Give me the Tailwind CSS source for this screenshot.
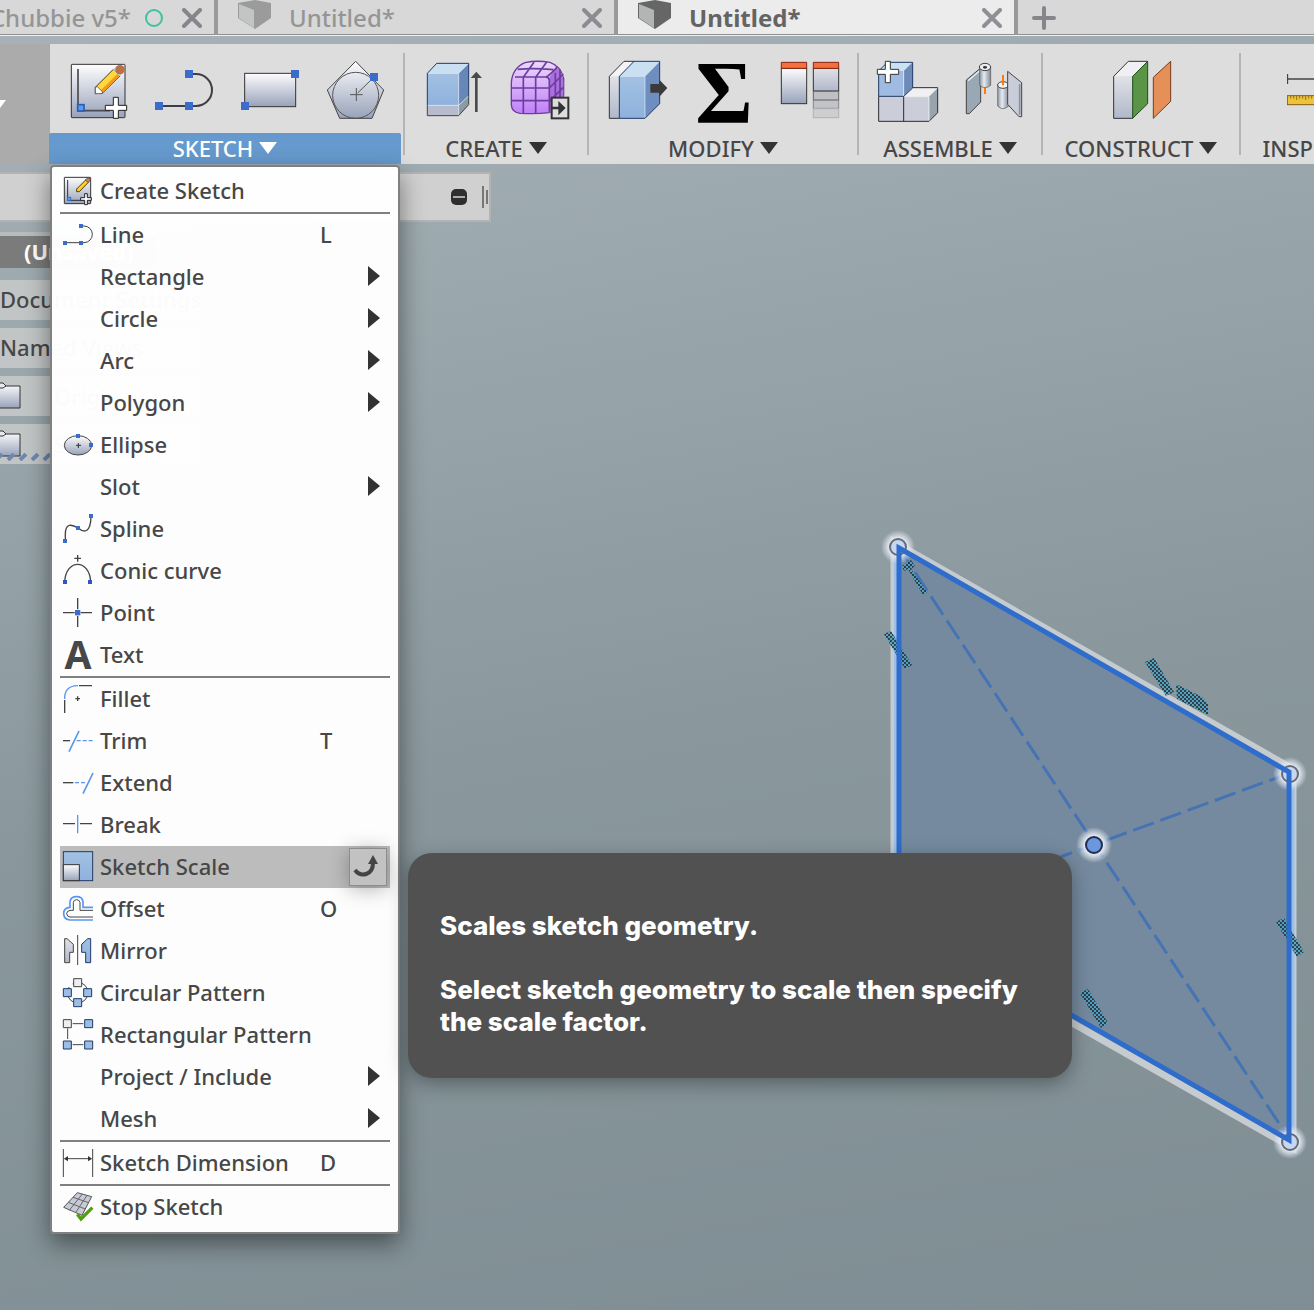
<!DOCTYPE html>
<html lang="en">
<head>
  <meta charset="UTF-8">
  <title>Untitled*</title>
  <script src="https://cdn.jsdelivr.net/npm/@tailwindcss/browser@4"></script>
</head>
<body class="font-['Noto_Sans','Open_Sans',sans-serif] text-[22px] font-medium text-[#474747]">
<div class="relative isolate min-h-screen overflow-hidden bg-linear-170 from-[#a7b3b8] via-[#8a989d] via-55% to-[#7f8e94]">

  <!-- shared gradients -->
  <svg class="absolute size-0" aria-hidden="true">
    <defs>
      <linearGradient id="steel" x1="0" y1="0" x2="0" y2="1"><stop offset="0" stop-color="#fdfdfe"/><stop offset="1" stop-color="#98a2ba"/></linearGradient>
      <linearGradient id="pale" x1="0" y1="0" x2="0" y2="1"><stop offset="0" stop-color="#e0e2e6"/><stop offset="1" stop-color="#b0b7ca"/></linearGradient>
      <linearGradient id="blue" x1="0" y1="0" x2="0" y2="1"><stop offset="0" stop-color="#a2c1e2"/><stop offset="1" stop-color="#8fb1dc"/></linearGradient>
      <linearGradient id="violet" x1="0" y1="0" x2="0" y2="1"><stop offset="0" stop-color="#ecd9fb"/><stop offset="1" stop-color="#c07ff8"/></linearGradient>
      <linearGradient id="tube" x1="0" y1="0" x2="1" y2="0"><stop offset="0" stop-color="#8d99a8"/><stop offset=".4" stop-color="#e8ebef"/><stop offset="1" stop-color="#7f8b9a"/></linearGradient>
      <radialGradient id="glow"><stop offset=".55" stop-color="#e2e7f0" stop-opacity=".95"/><stop offset="1" stop-color="#dfe5ee" stop-opacity="0"/></radialGradient>
      <pattern id="hatch" width="4" height="4" patternUnits="userSpaceOnUse"><rect width="4" height="4" fill="#20323c"/><rect width="2" height="2" fill="#4aa3c4"/><rect x="2" y="2" width="2" height="2" fill="#4aa3c4"/></pattern>
    </defs>
  </svg>

  <!-- sketch on the canvas -->
  <svg class="absolute left-0 top-0 -z-10" width="1314" height="1310" fill="none" aria-label="Sketch profile">
    <path d="M894 542 L1293 769 V1148 L894 922 Z" stroke="#c5cbce" stroke-width="7"/>
    <path d="M899 548 L1290 772 V1140 L899 916 Z" fill="#758a9f"/>
    <path d="M899 548 L1290 1140" stroke="#4673b3" stroke-width="3" stroke-dasharray="22 7"/>
    <path d="M1290 773 L899 916" stroke="#4673b3" stroke-width="3" stroke-dasharray="22 7"/>
    <path d="M1292 774 V1140" stroke="#9dbfe8" stroke-width="5"/>
    <path d="M896 550 V916" stroke="#9dbfe8" stroke-width="4"/>
    <g fill="url(#hatch)" opacity=".85">
      <path d="M884 634 L891 631 L912 665 L905 669 Z"/>
      <path d="M1145 662 L1154 658 L1174 692 L1166 696 Z"/>
      <path d="M1176 684 L1202 697 L1208 704 V715 L1177 699 Z"/>
      <path d="M1080 993 L1088 989 L1108 1023 L1101 1028 Z"/>
      <path d="M1276 922 L1284 918 L1304 952 L1297 957 Z"/>
      <path d="M902 566 L911 560 L915 566 L911 569 L927 592 L923 595 L908 569 L904 571 Z"/>
    </g>
    <g fill="url(#glow)">
      <circle cx="898" cy="547" r="17"/>
      <circle cx="1290" cy="774" r="17"/>
      <circle cx="1290" cy="1142" r="17"/>
      <circle cx="1094" cy="845" r="18"/>
    </g>
    <g stroke="#666c75" stroke-width="2" fill="#c6d6f3">
      <circle cx="898" cy="547" r="8"/>
      <circle cx="1290" cy="774" r="8"/>
      <circle cx="1290" cy="1142" r="8"/>
    </g>
    <circle cx="1094" cy="845" r="8" stroke="#1f2f52" stroke-width="2" fill="#6c97dd"/>
    <path d="M899 548 L1289 772 V1140 L899 916 Z" stroke="#2e6dcb" stroke-width="5"/>
  </svg>

  <!-- document tabs -->
  <header class="flex h-[36px] border-b border-[#f0f0ee] bg-[#d8d8d8] text-[24px] leading-[34px] text-[#959595] shadow-[inset_0_-1px_#8f908c]">
    <div class="flex w-[218px] shrink-0 items-center justify-end border-r-4 border-[#999] pr-[12px]">
      <span class="whitespace-nowrap">Chubbie v5*</span>
      <span class="ml-[14px] size-[18px] shrink-0 rounded-full border-2 border-[#43bfa0]"></span>
      <button class="ml-[19px]" aria-label="Close Chubbie v5"><svg width="20" height="20" viewBox="0 0 20 20"><path d="M2 2 18 18M18 2 2 18" stroke="#85868c" stroke-width="4" stroke-linecap="round"/></svg></button>
    </div>
    <div class="flex w-[400px] shrink-0 items-center border-r-4 border-[#999] pl-[20px] pr-[12px]">
      <svg class="self-start" width="33" height="30" viewBox="0 0 33 30"><path d="M0 3 17 0 33 3V18L17 29 0 18Z" fill="#9b9b9b"/><path d="M1 4 16 10V28L1 18Z" fill="#c3c5c5"/></svg>
      <span class="ml-[18px]">Untitled*</span>
      <button class="ml-auto" aria-label="Close Untitled"><svg width="20" height="20" viewBox="0 0 20 20"><path d="M2 2 18 18M18 2 2 18" stroke="#8b8c92" stroke-width="4" stroke-linecap="round"/></svg></button>
    </div>
    <div class="flex w-[400px] shrink-0 items-center border-r-4 border-[#999] bg-[#ececec] bg-clip-padding pl-[20px] pr-[12px] shadow-[inset_0_-1px_#8f908c]">
      <svg class="self-start" width="33" height="30" viewBox="0 0 33 30"><path d="M0 3 17 0 33 3V18L17 29 0 18Z" fill="#666"/><path d="M1 4 16 10V28L1 18Z" fill="#b3b5b5"/></svg>
      <span class="ml-[18px] font-bold text-[#646464]">Untitled*</span>
      <button class="ml-auto" aria-label="Close Untitled"><svg width="20" height="20" viewBox="0 0 20 20"><path d="M2 2 18 18M18 2 2 18" stroke="#8f9096" stroke-width="4" stroke-linecap="round"/></svg></button>
    </div>
    <button class="ml-[14px]" aria-label="New tab"><svg width="24" height="24" viewBox="0 0 24 24"><path d="M12 2V22M2 12H22" stroke="#85868c" stroke-width="4" stroke-linecap="round"/></svg></button>
  </header>

  <!-- toolbar -->
  <nav class="mt-[8px] flex h-[120px] bg-[#ddd]">
    <button class="w-[50px] shrink-0 bg-[#ababab]" aria-label="Workspace"><svg width="6" height="8" viewBox="0 0 6 8"><path d="M0 0H6L0 8Z" fill="#fff"/></svg></button>

    <section class="flex w-[353px] shrink-0 flex-col pr-[2px]">
      <div class="flex h-[89px] items-end pl-[6px] pb-[9px]">
        <button class="flex w-[86px] justify-center" aria-label="Create Sketch">
          <svg width="64" height="66" viewBox="201 174 192 198" fill="none">
            <rect x="214" y="193" width="161" height="160" rx="2" fill="url(#steel)" stroke="#333" stroke-width="3"/>
            <path d="M234 207V332H330" stroke="#4a4a50" stroke-width="5"/>
            <rect x="233" y="314" width="19" height="19" fill="#5a9bf5" stroke="#2a5fae" stroke-width="5"/>
            <path d="M286 281V262L340 208 360 228 308 279Z" fill="#ffd83a" stroke="#4a3a1a" stroke-width="3"/>
            <path d="M300 273 355 219 362 226 308 279Z" fill="#f29a1c"/>
            <path d="M286 281V262L292 260 308 276 306 281Z" fill="#fff" stroke="#333" stroke-width="2"/>
            <path d="M339 208 347 201 368 220 360 229Z" fill="#c9cdd4"/>
            <circle cx="360" cy="209" r="14" fill="#b97148"/>
            <path d="M340 292H355V316H380V331H355V355H340V331H316V316H340Z" fill="#fff" stroke="#222" stroke-width="3"/>
          </svg>
        </button>
        <button class="flex w-[86px] justify-center" aria-label="Line">
          <svg width="64" height="66" viewBox="459 174 192 198" fill="none">
            <path d="M477 318H588A48 48 0 0 0 588 222H567" stroke="#3d3f45" stroke-width="6"/>
            <path d="M465 306h24v24h-24zM555 306h24v24h-24zM555 210h24v24h-24z" fill="#3b6cc9"/>
          </svg>
        </button>
        <button class="flex w-[86px] justify-center" aria-label="Rectangle">
          <svg width="64" height="66" viewBox="717 174 192 198" fill="none">
            <rect x="734" y="220" width="153" height="100" fill="url(#steel)" stroke="#333" stroke-width="3"/>
            <path d="M723 306h24v24h-24zM873 210h24v24h-24z" fill="#3b6cc9"/>
          </svg>
        </button>
        <button class="flex w-[86px] justify-center" aria-label="Polygon">
          <svg width="64" height="66" viewBox="975 174 192 198" fill="none">
            <path d="M1067 184 1151 270 1116 355H1019L982 270Z" fill="url(#steel)" stroke="#444" stroke-width="3"/>
            <circle cx="1067" cy="286" r="69" stroke="#555" stroke-width="3"/>
            <path d="M1050 284H1088M1069 264V303M1073 279 1115 238" stroke="#555" stroke-width="3"/>
            <path d="M1110 219h24v24h-24z" fill="#3b6cc9"/>
          </svg>
        </button>
      </div>
      <button class="-ml-[1px] flex h-[31px] items-center justify-center gap-[6px] rounded-t-[2px] bg-[#6699cd] pb-[1px] text-white">SKETCH<svg width="18" height="12" viewBox="0 0 18 12"><path d="M0 0H18L9 12Z" fill="currentColor"/></svg></button>
    </section>
    <span class="my-[9px] w-[2px] shrink-0 bg-[#b5b5b5]"></span>

    <section class="flex w-[182px] shrink-0 flex-col">
      <div class="flex h-[89px] items-end pl-[6px] pb-[9px]">
        <button class="flex w-[86px] justify-center" aria-label="Extrude">
          <svg width="64" height="66" viewBox="66 174 192 198" fill="none">
            <path d="M82 220 110 190H206V314L176 347H82Z" fill="#cbdff2"/>
            <path d="M82 220H176V316H82Z" fill="url(#blue)"/>
            <path d="M176 220 206 190V288L176 316Z" fill="#6687b8"/>
            <path d="M82 316H176V347H82Z" fill="#b6bccb"/>
            <path d="M176 316 206 288V314L176 347Z" fill="#8c9aa3"/>
            <path d="M82 316H176L206 288M84 220H176V345M176 220 204 192" stroke="#e4eefa" stroke-width="2"/>
            <path d="M82 316V220L110 190H206V290" stroke="#203a66" stroke-width="3"/>
            <path d="M82 316V347H176L206 314V290" stroke="#444" stroke-width="3"/>
            <path d="M229 336V232" stroke="#4a4a4a" stroke-width="8"/>
            <path d="M212 234 229 215 246 234Z" fill="#4a4a4a"/>
          </svg>
        </button>
        <button class="flex w-[86px] justify-center" aria-label="Create Form">
          <svg width="64" height="66" viewBox="324 174 192 198" fill="none">
            <path d="M334 250Q336 205 375 188Q410 180 450 187Q482 198 491 235V285Q480 325 448 338Q410 343 360 340Q336 338 334 315Z" fill="url(#violet)" stroke="#6b3d9c" stroke-width="4"/>
            <path d="M448 232Q470 198 476 206Q490 225 490 245V285Q480 325 448 338Z" fill="#ac6fe0"/>
            <path d="M336 264H448L490 222M336 302H450L490 262M370 340V232L402 187M407 340V232L440 186M448 335V240Q446 232 438 231H345M440 231Q465 210 472 200M353 208Q400 203 460 209M466 315V218M480 305V208" stroke="#6b3d9c" stroke-width="5"/>
            <rect x="455" y="293" width="50" height="62" fill="#ddd" stroke="#333" stroke-width="6"/>
            <path d="M453 320H475V303L497 324 475 346V328H453Z" fill="#333"/>
          </svg>
        </button>
      </div>
      <button class="flex h-[31px] items-center justify-center gap-[6px] pb-[1px]">CREATE<svg width="18" height="12" viewBox="0 0 18 12"><path d="M0 0H18L9 12Z" fill="#333"/></svg></button>
    </section>
    <span class="my-[9px] w-[2px] shrink-0 bg-[#b5b5b5]"></span>

    <section class="flex w-[268px] shrink-0 flex-col">
      <div class="flex h-[89px] items-end pl-[6px] pb-[9px]">
        <button class="flex w-[86px] justify-center" aria-label="Press Pull">
          <svg width="64" height="66" viewBox="618 174 192 198" fill="none">
            <path d="M628 229 672 184H702L658 229V355H628Z" fill="#f4f4f6"/>
            <path d="M628 229H658V355H628Z" fill="url(#pale)"/>
            <path d="M658 229 702 184H779L735 229Z" fill="#cbdff2"/>
            <path d="M658 229H735V355H658Z" fill="url(#blue)"/>
            <path d="M735 229 779 184V311L735 355Z" fill="#6e8ebf"/>
            <path d="M660 229H735V353M735 229 777 186" stroke="#dcebfa" stroke-width="2"/>
            <path d="M658 355H628V229L672 184H702" stroke="#333" stroke-width="3"/>
            <path d="M658 229 702 184H779V311L735 355H658Z" stroke="#203a66" stroke-width="3"/>
            <path d="M751 252H778V239L802 264 778 290V278H751Z" fill="#3a3a3a"/>
          </svg>
        </button>
        <button class="flex h-[66px] w-[86px] items-center justify-center pt-[4px] font-['Liberation_Serif',serif] text-[88px] font-bold leading-[66px] text-black" aria-label="Change Parameters">Σ</button>
        <button class="flex w-[86px] justify-center" aria-label="Compute All">
          <svg width="64" height="66" viewBox="1134 174 192 198" fill="none">
            <rect x="1144" y="205" width="76" height="106" fill="url(#steel)" stroke="#333" stroke-width="3"/>
            <rect x="1240" y="205" width="76" height="68" fill="url(#pale)" stroke="#333" stroke-width="3"/>
            <rect x="1240" y="274" width="76" height="26" fill="#bfc0c4" stroke="#666" stroke-width="3"/>
            <rect x="1240" y="301" width="76" height="24" fill="#c2c3c8" stroke="#888" stroke-width="3"/>
            <rect x="1240" y="326" width="76" height="27" fill="#cdced0" stroke="#b0b0b0" stroke-width="3"/>
            <path d="M1144 187h76v18h-76zM1240 187h76v18h-76z" fill="#f4713f" stroke="#8c2410" stroke-width="3"/>
          </svg>
        </button>
      </div>
      <button class="flex h-[31px] items-center justify-center gap-[6px] pb-[1px]">MODIFY<svg width="18" height="12" viewBox="0 0 18 12"><path d="M0 0H18L9 12Z" fill="#333"/></svg></button>
    </section>
    <span class="my-[9px] w-[2px] shrink-0 bg-[#b5b5b5]"></span>

    <section class="flex w-[182px] shrink-0 flex-col">
      <div class="flex h-[89px] items-end pl-[6px] pb-[9px]">
        <button class="flex w-[86px] justify-center" aria-label="New Component">
          <svg width="64" height="66" viewBox="78 174 192 198" fill="none">
            <path d="M86 213 112 187H188V264L161 289H86Z" fill="#cbe2f5"/>
            <path d="M86 213H161V289H86Z" fill="#9fbbe2"/>
            <path d="M161 213 188 187V264L161 289Z" fill="#6e8ab8"/>
            <path d="M161 289 188 263H263L237 289Z" fill="#f0f0f4"/>
            <path d="M86 289H237V364H86Z" fill="#cbced9"/>
            <path d="M237 289 263 263V338L237 364Z" fill="#98a3ab"/>
            <path d="M188 263H263V338L237 364H86V289M161 289V364" stroke="#2a2c33" stroke-width="3"/>
            <path d="M86 213 112 187H188V264L161 289H86Z" stroke="#203a66" stroke-width="3"/>
            <path d="M164 290H237V362M237 289 261 265M161 213V288" stroke="#fff" stroke-width="2"/>
            <path d="M106 184H121V208H146V223H121V248H106V223H82V208H106Z" fill="#fff" stroke="#333" stroke-width="3"/>
          </svg>
        </button>
        <button class="flex w-[86px] justify-center" aria-label="Joint">
          <svg width="64" height="66" viewBox="336 174 192 198" fill="none">
            <path d="M349 240 392 204V306L358 341H349Z" fill="#9aa7b4" stroke="#444" stroke-width="3"/>
            <path d="M354 242 388 213" stroke="#eef1f4" stroke-width="4"/>
            <path d="M405 262V282" stroke="#ff7a0a" stroke-width="6"/>
            <path d="M389 200V256Q405 270 422 256V200Z" fill="url(#tube)" stroke="#555" stroke-width="2"/>
            <ellipse cx="405" cy="201" rx="17" ry="11" fill="#e9ebee" stroke="#444" stroke-width="3"/>
            <ellipse cx="405" cy="202" rx="6" ry="4" fill="#333"/>
            <path d="M443 254V318Q458 334 476 318V254Z" fill="url(#tube)" stroke="#555" stroke-width="2"/>
            <ellipse cx="459" cy="255" rx="16" ry="10" fill="#f4f4f4" stroke="#444" stroke-width="3"/>
            <path d="M459 225V256" stroke="#ff7a0a" stroke-width="6"/>
            <path d="M473 214 515 248V350H507L473 313Z" fill="#c9cdd8" stroke="#444" stroke-width="3"/>
            <path d="M509 252V344" stroke="#8a929f" stroke-width="5"/>
          </svg>
        </button>
      </div>
      <button class="flex h-[31px] items-center justify-center gap-[6px] pb-[1px]">ASSEMBLE<svg width="18" height="12" viewBox="0 0 18 12"><path d="M0 0H18L9 12Z" fill="#333"/></svg></button>
    </section>
    <span class="my-[9px] w-[2px] shrink-0 bg-[#b5b5b5]"></span>

    <section class="flex w-[196px] shrink-0 flex-col">
      <div class="flex h-[89px] items-end justify-center pb-[9px]">
        <button class="flex w-[86px] justify-center" aria-label="Offset Plane">
          <svg width="64" height="66" viewBox="777 174 192 198" fill="none">
            <path d="M791 229 835 184H893L848 229Z" fill="#f0f0f4"/>
            <path d="M791 229H848V355H791Z" fill="url(#pale)"/>
            <path d="M791 355V229L835 184H893M791 355H848" stroke="#333" stroke-width="3"/>
            <path d="M848 229 893 184V311L848 355Z" fill="#5a9446" stroke="#1f4d1f" stroke-width="3"/>
            <path d="M910 232 962 184V304L910 355Z" fill="#e59058" stroke="#7a3a1a" stroke-width="3"/>
          </svg>
        </button>
      </div>
      <button class="flex h-[31px] items-center justify-center gap-[6px] pb-[1px]">CONSTRUCT<svg width="18" height="12" viewBox="0 0 18 12"><path d="M0 0H18L9 12Z" fill="#333"/></svg></button>
    </section>
    <span class="my-[9px] w-[2px] shrink-0 bg-[#b5b5b5]"></span>

    <section class="flex w-[156px] shrink-0 flex-col">
      <div class="flex h-[89px] items-end justify-center pb-[9px]">
        <button class="flex w-[86px] justify-center" aria-label="Measure">
          <svg width="64" height="66" viewBox="1320 174 192 198" fill="none">
            <path d="M1321 222V252M1321 237H1490" stroke="#444" stroke-width="5"/>
            <rect x="1321" y="287" width="170" height="27" fill="#ecc33a" stroke="#8a5a10" stroke-width="3"/>
            <path d="M1331 288v8M1340 288v8M1349 288v12M1358 288v8M1367 288v8M1376 288v12M1385 288v8M1394 288v8M1403 288v12M1412 288v8" stroke="#6a4a10" stroke-width="2"/>
          </svg>
        </button>
      </div>
      <button class="flex h-[31px] items-center justify-center gap-[6px] pb-[1px]">INSPECT<svg width="18" height="12" viewBox="0 0 18 12"><path d="M0 0H18L9 12Z" fill="#333"/></svg></button>
    </section>
  </nav>

  <!-- browser panel, partly behind the menu -->
  <aside class="relative pt-[8px]">
    <div class="flex h-[50px] w-[491px] items-center justify-end border-2 border-l-0 border-[#b3b3b1] bg-[#d0d0d0] pr-[1px]">
      <button class="mr-[15px]" aria-label="Collapse"><svg width="16" height="16" viewBox="0 0 16 16"><rect width="16" height="16" rx="5" fill="#2e2e2e"/><path d="M2 8H14" stroke="#aaa" stroke-width="2"/></svg></button>
      <svg width="6" height="22" viewBox="0 0 6 22"><path d="M1 0V22M5 4V18" stroke="#777" stroke-width="2"/></svg>
    </div>
    <div class="mt-[10px] w-[200px] whitespace-nowrap leading-[38px]">
      <div class="mt-[4px] h-[4px] w-[155px] bg-[#b9bcbc]"></div>
      <div class="h-[32px] w-[155px] bg-[#7b7b7b] pl-[24px] font-bold leading-[30px] text-white">(Unsaved)</div>
      <div class="mt-[12px] h-[40px] bg-[#c2c5c5]">Document Settings</div>
      <div class="mt-[8px] h-[40px] bg-[#c2c5c5]">Named Views</div>
      <div class="mt-[8px] flex h-[40px] items-center bg-[#c2c5c5]">
        <svg width="22" height="28" viewBox="0 0 22 28"><path d="M-4 26V2H3L6 4H20V26Z" fill="url(#steel)" stroke="#333"/><path d="M-2 1H3L6 4 3 6H-2Z" fill="#e8e8ee" stroke="#333"/></svg>
        <span class="ml-[32px]">Origin</span>
      </div>
      <div class="relative mt-[8px] flex h-[40px] items-center bg-[#c2c5c5]">
        <svg width="22" height="28" viewBox="0 0 22 28"><path d="M-4 26V2H3L6 4H20V26Z" fill="url(#steel)" stroke="#333"/><path d="M-2 1H3L6 4 3 6H-2Z" fill="#e8e8ee" stroke="#333"/></svg>
        <span class="ml-[32px]">Sketches</span>
        <svg class="absolute bottom-[3px] left-0" width="50" height="8" viewBox="0 0 50 8"><path d="M-4 7 2 1M8 7 14 1M20 7 26 1M32 7 38 1M44 7 50 1" stroke="#6d86b3" stroke-width="4"/></svg>
      </div>
    </div>
  </aside>

  <!-- SKETCH drop-down -->
  <div role="menu" class="absolute left-[50px] top-[165px] w-[350px] rounded-[4px] border-2 border-[#808080] bg-white/98 px-[8px] pb-[4px] pt-[3px] shadow-[0_10px_24px_rgba(0,0,0,0.45)] [&>button]:flex [&>button]:h-[42px] [&>button]:w-full [&>button]:items-center [&>button]:pb-[2px] [&>button]:pl-[1px] [&>button]:text-left [&>button>svg:first-child]:mt-[4px] [&>hr]:border-t-2 [&>hr]:border-[#808080]">
    <button role="menuitem">
      <svg class="mr-[5px]" width="34" height="36" viewBox="183 39 102 108" fill="none">
        <rect x="193" y="49" width="79" height="79" rx="1" fill="url(#steel)" stroke="#333" stroke-width="3"/>
        <path d="M203 57V118H250" stroke="#333" stroke-width="3"/>
        <rect x="203" y="109" width="9" height="9" fill="#6aa5f5" stroke="#2f6fd0" stroke-width="3"/>
        <path d="M230 92V84L258 56 265 64 238 92Z" fill="#ffd02a" stroke="#4a3a1a" stroke-width="3"/>
        <path d="M256 57 262 51Q270 48 271 57L265 65Z" fill="#c08b68" stroke="#4a3a1a" stroke-width="2"/>
        <path d="M254 98H262V110H274V118H262V131H254V118H242V110H254Z" fill="#fff" stroke="#222" stroke-width="3"/>
      </svg>Create Sketch
    </button>
    <hr>
    <button role="menuitem">
      <svg class="mr-[5px]" width="34" height="36" viewBox="183 171 102 108" fill="none">
        <path d="M195 245H252A25 25 0 0 0 252 195H243" stroke="#444" stroke-width="3"/>
        <path d="M189 240h12v12h-12zM237 240h12v12h-12zM237 189h12v12h-12z" fill="#3b6cc9"/>
      </svg>Line<span class="ml-auto w-[70px]">L</span>
    </button>
    <button role="menuitem"><span class="ml-[39px]">Rectangle</span><svg class="ml-auto mr-[10px]" width="12" height="20" viewBox="0 0 12 20"><path d="M0 0 12 10 0 20Z" fill="#333"/></svg></button>
    <button role="menuitem"><span class="ml-[39px]">Circle</span><svg class="ml-auto mr-[10px]" width="12" height="20" viewBox="0 0 12 20"><path d="M0 0 12 10 0 20Z" fill="#333"/></svg></button>
    <button role="menuitem"><span class="ml-[39px]">Arc</span><svg class="ml-auto mr-[10px]" width="12" height="20" viewBox="0 0 12 20"><path d="M0 0 12 10 0 20Z" fill="#333"/></svg></button>
    <button role="menuitem"><span class="ml-[39px]">Polygon</span><svg class="ml-auto mr-[10px]" width="12" height="20" viewBox="0 0 12 20"><path d="M0 0 12 10 0 20Z" fill="#333"/></svg></button>
    <button role="menuitem">
      <svg class="mr-[5px]" width="34" height="36" viewBox="183 801 102 108" fill="none">
        <ellipse cx="234" cy="853" rx="41" ry="29" fill="url(#steel)" stroke="#444" stroke-width="3"/>
        <path d="M228 853H243M235 846V861" stroke="#333" stroke-width="3"/>
        <path d="M228 819h12v12h-12zM267 846h12v12h-12z" fill="#3b6cc9"/>
      </svg>Ellipse
    </button>
    <button role="menuitem"><span class="ml-[39px]">Slot</span><svg class="ml-auto mr-[10px]" width="12" height="20" viewBox="0 0 12 20"><path d="M0 0 12 10 0 20Z" fill="#333"/></svg></button>
    <button role="menuitem">
      <svg class="mr-[5px]" width="34" height="36" viewBox="33 273 102 108" fill="none">
        <path d="M46 360V340C46 305 66 310 84 321C104 337 122 335 123 286" stroke="#444" stroke-width="4"/>
        <path d="M39 354h12v12h-12zM78 315h12v12h-12zM117 279h12v12h-12z" fill="#3b6cc9"/>
      </svg>Spline
    </button>
    <button role="menuitem">
      <svg class="mr-[5px]" width="34" height="36" viewBox="33 399 102 108" fill="none">
        <path d="M44 484C46 412 120 412 122 484M73 412H93M83 402V422" stroke="#444" stroke-width="4"/>
        <path d="M39 477h12v12h-12zM114 477h12v12h-12z" fill="#3156bd"/>
      </svg>Conic curve
    </button>
    <button role="menuitem">
      <svg class="mr-[5px]" width="34" height="36" viewBox="33 525 102 108" fill="none">
        <path d="M39 575H74M92 575H126M83 531V565M83 585V618" stroke="#444" stroke-width="4"/>
        <path d="M75 567h16v16h-16z" fill="#3b6cc9"/>
      </svg>Point
    </button>
    <button role="menuitem"><span class="mr-[5px] w-[34px] text-center text-[39px] font-bold leading-[40px]" aria-hidden="true">A</span>Text</button>
    <hr>
    <button role="menuitem">
      <svg class="mr-[5px]" width="34" height="36" viewBox="33 33 102 108" fill="none">
        <path d="M44 84Q43 44 84 44" stroke="#5b96ee" stroke-width="4"/>
        <path d="M44 87V126M87 44H126M76 83H90M83 76V90" stroke="#444" stroke-width="4"/>
      </svg>Fillet
    </button>
    <button role="menuitem">
      <svg class="mr-[5px]" width="34" height="36" viewBox="33 159 102 108" fill="none">
        <path d="M39 209H60" stroke="#444" stroke-width="4"/>
        <path d="M57 242 87 180" stroke="#5b96ee" stroke-width="5"/>
        <path d="M80 209H129" stroke="#5b96ee" stroke-width="4" stroke-dasharray="12 6"/>
      </svg>Trim<span class="ml-auto w-[70px]">T</span>
    </button>
    <button role="menuitem">
      <svg class="mr-[5px]" width="34" height="36" viewBox="33 285 102 108" fill="none">
        <path d="M39 335H70" stroke="#444" stroke-width="4"/>
        <path d="M75 335H106" stroke="#5b96ee" stroke-width="4" stroke-dasharray="12 6"/>
        <path d="M99 368 129 306" stroke="#5b96ee" stroke-width="5"/>
      </svg>Extend
    </button>
    <button role="menuitem">
      <svg class="mr-[5px]" width="34" height="36" viewBox="33 411 102 108" fill="none">
        <path d="M39 458H75M90 458H126" stroke="#444" stroke-width="4"/>
        <path d="M83 432V487" stroke="#5b96ee" stroke-width="4"/>
      </svg>Break
    </button>
    <button role="menuitem" class="bg-[#bcbcbc]">
      <svg class="mr-[5px]" width="34" height="36" viewBox="33 537 102 108" fill="none">
        <rect x="40" y="542" width="88" height="87" fill="url(#blue)" stroke="#203a66" stroke-width="3"/>
        <rect x="40" y="581" width="48" height="48" fill="url(#steel)" stroke="#333" stroke-width="3"/>
      </svg>Sketch Scale
      <span class="ml-auto mr-[3px] mt-[2px] flex size-[38px] items-center justify-center border border-[#8c8c8c] bg-[#c2c2c2] shadow-[0_3px_20px_rgba(0,0,0,0.3)]">
        <svg class="mr-[4px]" width="26" height="24" viewBox="0 0 26 24" fill="none"><path d="M2 15C8 23 20 20 20 8" stroke="#444" stroke-width="4"/><path d="M15 9 20 0 25 9Z" fill="#444"/></svg>
      </span>
    </button>
    <button role="menuitem">
      <svg class="mr-[5px]" width="34" height="36" viewBox="33 663 102 108" fill="none">
        <path d="M129 709H99V692Q97 677 80 677Q62 677 60 692V709Q41 710 41 728Q42 746 60 747H129" stroke="#5b96ee" stroke-width="5"/>
        <path d="M129 718H90V694Q88 686 80 686Q71 686 70 694V718H60Q50 720 50 728Q51 737 60 738H129" stroke="#444" stroke-width="3"/>
      </svg>Offset<span class="ml-auto w-[70px]">O</span>
    </button>
    <button role="menuitem">
      <svg class="mr-[5px]" width="34" height="36" viewBox="33 9 102 108" fill="none">
        <path d="M44 23H51L70 40V64H59V95H44Z" fill="url(#pale)" stroke="#444" stroke-width="3"/>
        <path d="M122 23H113L95 40V64H107V95H122Z" fill="url(#blue)" stroke="#203a66" stroke-width="3"/>
        <path d="M83 12V102" stroke="#444" stroke-width="3"/>
      </svg>Mirror
    </button>
    <button role="menuitem">
      <svg class="mr-[5px]" width="34" height="36" viewBox="33 135 102 108" fill="none">
        <circle cx="83" cy="185" r="31" stroke="#444" stroke-width="3"/>
        <path d="M48 148H68V168H48Z" fill="#fdfdfd"/>
        <path d="M71 143h24v24h-24z" fill="#eceef2" stroke="#444" stroke-width="3"/>
        <path d="M40 173h24v24h-24zM101 173h24v24h-24zM71 203h24v24h-24z" fill="#9dbde6" stroke="#203a66" stroke-width="3"/>
      </svg>Circular Pattern
    </button>
    <button role="menuitem">
      <svg class="mr-[5px]" width="34" height="36" viewBox="33 261 102 108" fill="none">
        <path d="M68 278H100M53 292V324M68 341H100" stroke="#444" stroke-width="3"/>
        <path d="M40 266h24v24h-24z" fill="#eceef2" stroke="#444" stroke-width="3"/>
        <path d="M104 266h24v24h-24zM40 330h24v24h-24zM104 330h24v24h-24z" fill="#9dbde6" stroke="#203a66" stroke-width="3"/>
      </svg>Rectangular Pattern
    </button>
    <button role="menuitem"><span class="ml-[39px]">Project / Include</span><svg class="ml-auto mr-[10px]" width="12" height="20" viewBox="0 0 12 20"><path d="M0 0 12 10 0 20Z" fill="#333"/></svg></button>
    <button role="menuitem"><span class="ml-[39px]">Mesh</span><svg class="ml-auto mr-[10px]" width="12" height="20" viewBox="0 0 12 20"><path d="M0 0 12 10 0 20Z" fill="#333"/></svg></button>
    <hr>
    <button role="menuitem">
      <svg class="mr-[5px]" width="34" height="36" viewBox="33 645 102 108" fill="none">
        <path d="M40 654V738M128 654V738M44 683H124" stroke="#444" stroke-width="3"/>
        <path d="M42 683 54 675V691ZM126 683 114 675V691Z" fill="#333"/>
      </svg>Sketch Dimension<span class="ml-auto w-[70px]">D</span>
    </button>
    <hr>
    <button role="menuitem">
      <svg class="mr-[5px]" width="34" height="36" viewBox="33 777 102 108" fill="none">
        <path d="M82 785 125 797 96 853 41 829Z" fill="#c6cbd5" stroke="#555" stroke-width="3"/>
        <path d="M97 789 58 838M111 793 76 846M69 799 116 815M55 814 106 834" stroke="#666" stroke-width="3"/>
        <path d="M82 850 93 864 127 830" stroke="#4fa00c" stroke-width="10"/>
      </svg>Stop Sketch
    </button>
  </div>

  <!-- tooltip of the highlighted command -->
  <div role="tooltip" class="absolute left-[408px] top-[853px] w-[664px] rounded-[24px] bg-[#515151] px-[32px] pb-[40px] pt-[57px] font-['Inter',sans-serif] text-[26px] font-extrabold leading-[32px] text-white shadow-[0_6px_20px_rgba(0,0,0,0.35)]">
    <p>Scales sketch geometry.</p>
    <p class="mt-[32px]">Select sketch geometry to scale then specify the scale factor.</p>
  </div>
</div>
</body>
</html>
